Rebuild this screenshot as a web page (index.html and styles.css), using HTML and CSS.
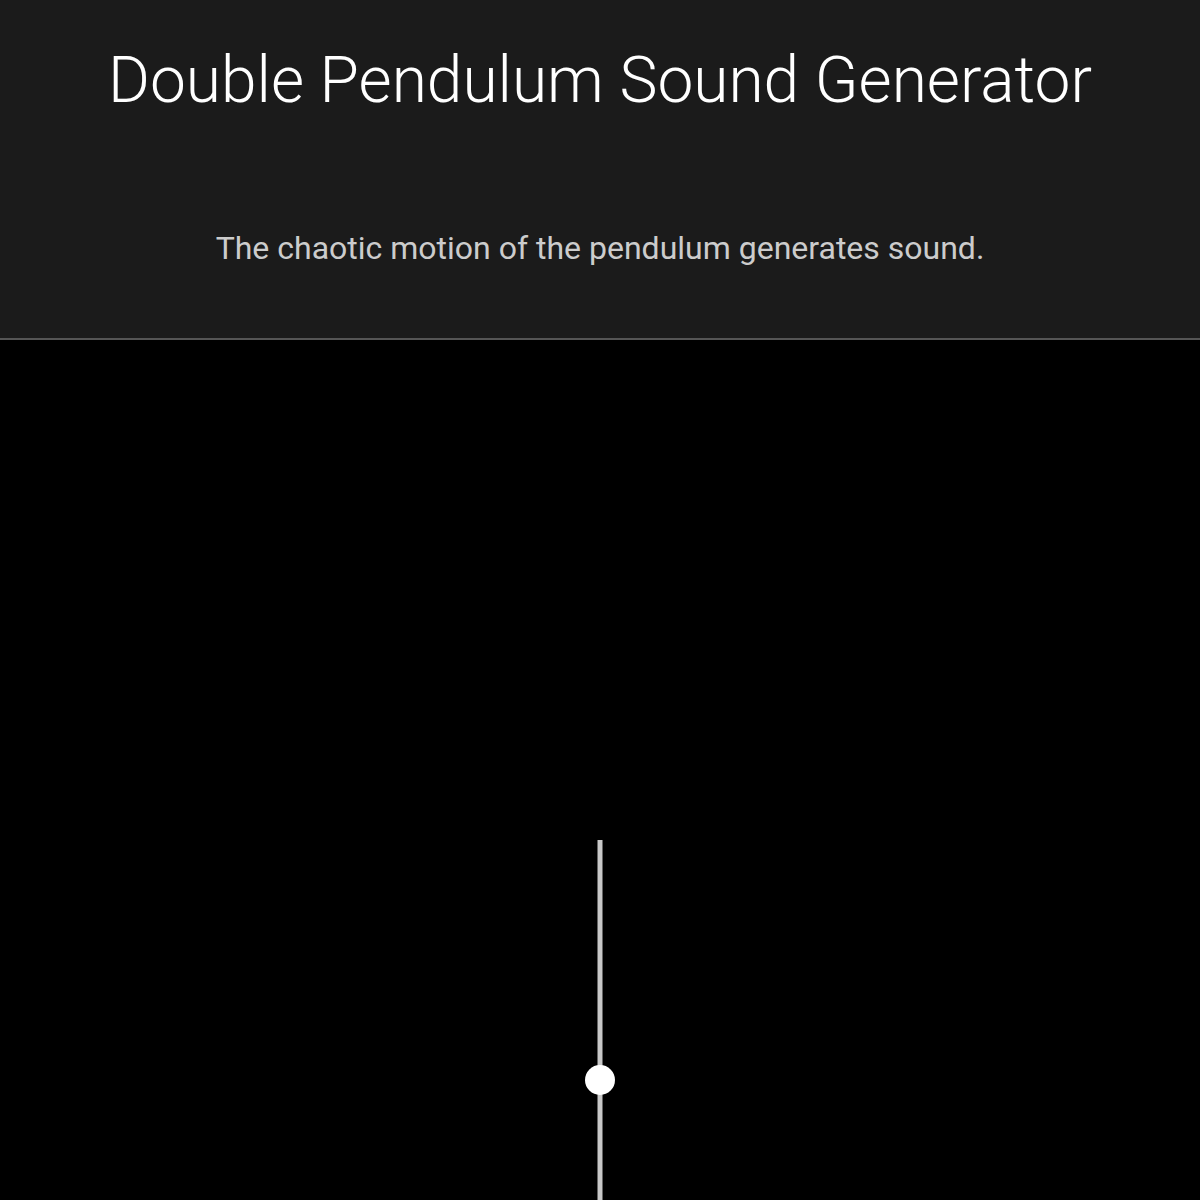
FILE: index.html
```html
<!DOCTYPE html>
<html lang="en">
<head>
    <meta charset="UTF-8">
    <meta name="viewport" content="width=device-width, initial-scale=1.0">
    <title>Double Pendulum Sound Generator</title>
    <link rel="stylesheet" href="styles.css">
</head>
<body>
    <!-- header -->
    <header class="header">
        <h1>Double Pendulum Sound Generator</h1>
        <p class="subtitle">The chaotic motion of the pendulum generates sound.</p>
    </header>

    <!-- pendulum -->
    <div class="stage">
        <svg class="pendulum" viewBox="0 0 1200 1000" width="1200" height="1000">
            <line x1="600" y1="500" x2="600" y2="740" class="arm"/>
            <line x1="600" y1="740" x2="600" y2="980" class="arm"/>
            <circle cx="600" cy="740" r="15" class="bob"/>
            <circle cx="600" cy="980" r="15" class="bob"/>
        </svg>
    </div>
</body>
</html>
```

FILE: styles.css
```css
body {
    margin: 0;
    background: #000;
    font-family: Roboto, "Liberation Sans", sans-serif;
    color: #fff;
}
.header {
    background: #1b1b1b;
    border-bottom: 2px solid #555;
    height: 340px;
    box-sizing: border-box;
    padding-top: 42px;
    text-align: center;
}
h1 {
    margin: 0;
    font-size: 64px;
    font-weight: 300;
    line-height: 77px;
}
.subtitle {
    margin: 110px 0 0;
    font-size: 32px;
    line-height: 38px;
    color: #cccccc;
}
.stage {
    height: 1000px;
    background: #000;
}
.pendulum {
    display: block;
}
.arm {
    stroke: #c8c8c8;
    stroke-width: 5;
}
.bob {
    fill: #fff;
}
```
